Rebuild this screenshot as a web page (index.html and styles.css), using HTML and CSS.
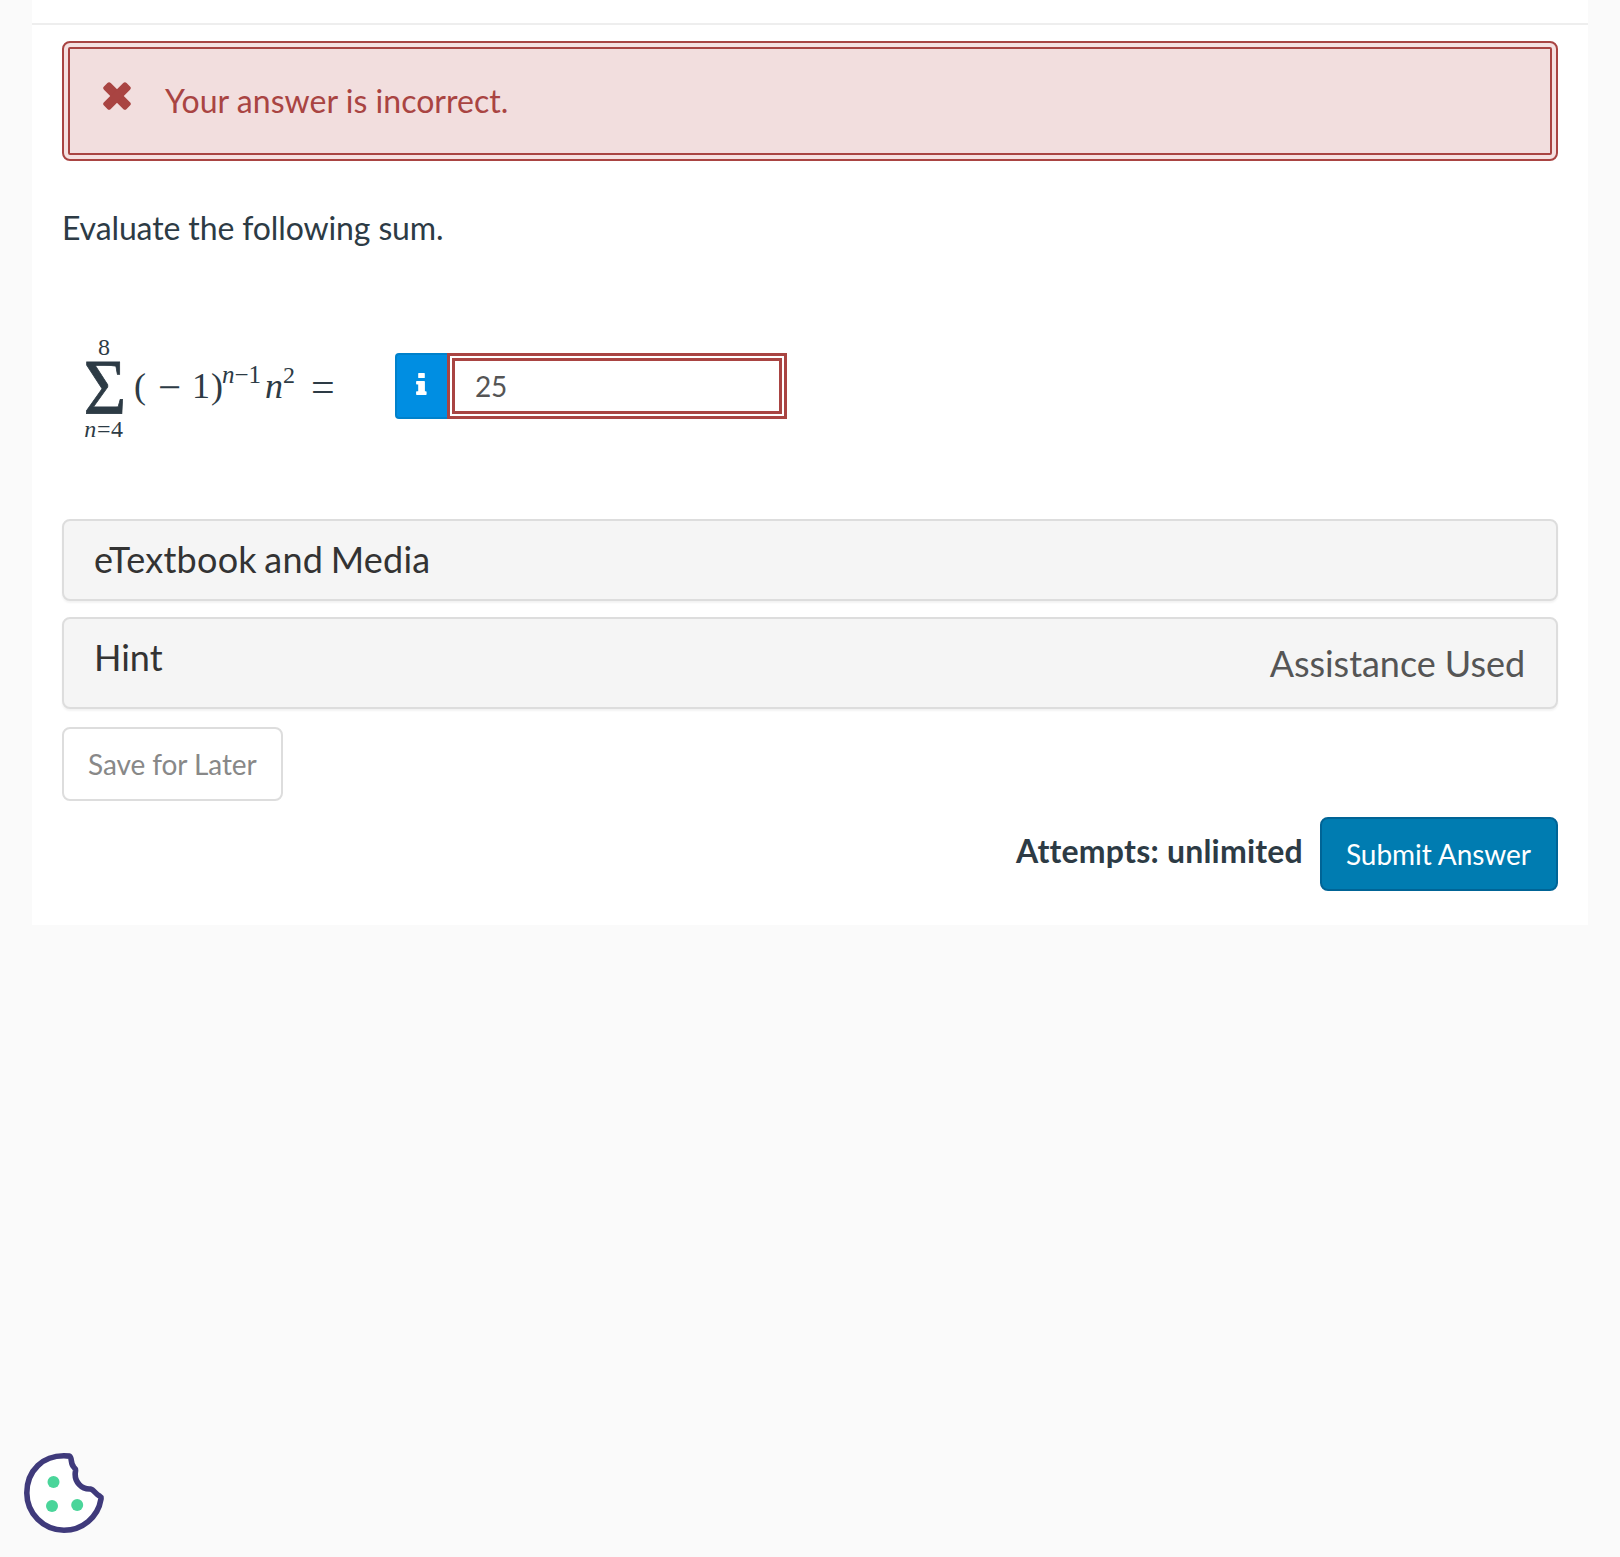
FILE: index.html
```html
<!DOCTYPE html>
<html lang="en">
<head>
    <meta charset="UTF-8">
    <meta name="viewport" content="width=device-width, initial-scale=1.0">
    <title>Question</title>
    <link rel="stylesheet" href="styles.css">
</head>
<body>
    <main class="card">
        <div class="card-top"></div>

        <div class="content">
            <div class="alert">
                <div class="alert-inner">
                    <svg class="icon-times" viewBox="0 0 28 28">
                        <g transform="rotate(45 14 14)">
                            <rect x="-2" y="9.200" width="32" height="9.600" rx="2.400" />
                            <rect x="9.200" y="-2" width="9.600" height="32" rx="2.400" />
                        </g>
                    </svg>
                    <span class="alert-text">Your answer is incorrect.</span>
                </div>
            </div>

            <p class="question">Evaluate the following sum.</p>

            <div class="answer-row">
                <div class="formula">
                    <div class="sum">
                        <span class="limit">8</span>
                        <span class="sigma">Σ</span>
                        <span class="limit lower"><i>n</i>=4</span>
                    </div>
                    <span class="paren">(</span>
                    <span class="minus">−</span>
                    <span class="one">1)</span>
                    <span class="sup exponent"><i>n</i>−1</span>
                    <span class="base"><i>n</i></span>
                    <span class="sup">2</span>
                    <span class="equals">=</span>
                </div>

                <div class="input-group">
                    <button class="info-btn" aria-label="Info">
                        <svg class="icon-info" viewBox="0 0 11 22">
                            <path d="M2.8 0h5.400q.6 0 .6.6v3.800q0 .6-.6.6H2.800q-.6 0-.6-.6V.6q0-.6.6-.6zM.8 8h7.400q.7 0 .7.7v9.500h1q.7 0 .7.7v2.300q0 .7-.7.7H.8q-.7 0-.7-.7v-2.300q0-.7.7-.7h1.400v-6.700H.8q-.7 0-.7-.7V8.700q0-.7.7-.7z" />
                        </svg>
                    </button>
                    <input class="answer-input" type="text" value="25">
                </div>
            </div>

            <div class="panel">
                <span class="etext">eTextbook and Media</span>
            </div>
            <div class="panel hint">
                <span>Hint</span>
                <span class="assist">Assistance Used</span>
            </div>

            <button class="btn save-btn">Save for Later</button>

            <div class="submit-row">
                <span class="attempts">Attempts: unlimited</span>
                <button class="btn submit-btn">Submit Answer</button>
            </div>
        </div>
    </main>

    <!-- Cookie settings -->
    <svg class="cookie" viewBox="0 0 80 80">
        <path class="cookie-body" d="M45.500 3.100 C18 0.300 2.800 19 2.800 40 A37.300 37.300 0 0 0 40 77.200 C58 77.200 74 64.500 77 46 Q77.300 44 75.500 43 C72 41.800 70 36.500 66.500 36 C58 36.500 49.500 29 51.500 18 Q51.800 15.800 50 14.300 C46 10.500 48.500 5 45.500 3.100 Z" />
        <circle cx="29.500" cy="29" r="6" />
        <circle cx="28" cy="53" r="6" />
        <circle cx="53.200" cy="52" r="6" />
    </svg>
</body>
</html>
```
FILE: styles.css
```css
* {
    box-sizing: border-box;
}

body {
    margin: 0;
    min-height: 1557px;
    background-color: #fafafa;
    color: #2d3b45;
    font-family: Lato, sans-serif;
    font-size: 32px;
    line-height: 38px;
    font-variant-ligatures: none;
}

button {
    font-family: inherit;
    font-variant-ligatures: none;
    cursor: pointer;
}

.card {
    height: 925px;
    margin: 0 32px;
    background-color: #fff;
}

.card-top {
    height: 25px;
    border-bottom: 2px solid #eee;
}

.content {
    padding: 16px 30px 0;
}

/* Alert */
.alert {
    height: 120px;
    padding: 4px;
    border: 2px solid #a94442;
    border-radius: 8px;
    background-color: #f5e0e0;
}

.alert-inner {
    display: flex;
    height: 108px;
    padding: 33px 32px;
    border: 2px solid #a94442;
    border-radius: 2px;
    background-color: #f2dede;
    color: #a94442;
}

.icon-times {
    width: 28px;
    height: 28px;
    margin: -0.5px 34.5px 0 0.5px;
    fill: #a94442;
}

.alert-text {
    letter-spacing: 0.04px;
}

.question {
    margin: 47.5px 0 0;
    letter-spacing: -0.12px;
}

/* Formula and answer */
.answer-row {
    display: flex;
    height: 112px;
    margin-top: 86.5px;
}

.formula {
    display: flex;
    width: 333px;
    padding: 2px 0 0 22px;
    font-family: "Liberation Serif", serif;
    font-size: 36px;
    line-height: 40px;
    white-space: nowrap;
}

.formula > span {
    margin-top: 31px;
}

.sum {
    display: flex;
    flex-direction: column;
    align-items: center;
    width: 42px;
    margin-left: -1px;
}

.limit {
    font-size: 24px;
    line-height: 24px;
}

.lower {
    margin-top: 1px;
    letter-spacing: 0.6px;
}

.sigma {
    height: 57px;
    font-size: 79px;
    line-height: 55px;
    transform: translateX(1px) scaleX(0.93);
    -webkit-text-stroke: 0.8px #2d3b45;
}

.paren {
    width: 24px;
    margin-left: 9px;
}

.formula > .minus {
    width: 34px;
    margin-top: 32px;
    font-size: 41px;
}

.one {
    letter-spacing: 1px;
}

.formula > .sup {
    margin-top: 20px;
    font-size: 24px;
}

.formula > .exponent {
    width: 43px;
    margin-left: -2px;
    font-size: 25px;
}

.formula > .equals {
    margin: 32px 0 0 16px;
    font-size: 42px;
}

.input-group {
    display: flex;
    height: 66px;
    margin-top: 20px;
}

.info-btn {
    width: 52px;
    padding: 0 2px 2px 0;
    border: 2px solid #0081cb;
    border-right: 0;
    border-radius: 4px 0 0 4px;
    background-color: #008ee2;
}

.icon-info {
    width: 11px;
    height: 22px;
    fill: #fff;
}

.answer-input {
    width: 340px;
    padding: 0 20px;
    border: 8px double #a94442;
    background-color: #fff;
    color: #555;
    font-family: inherit;
    font-size: 28px;
    letter-spacing: -0.3px;
}

/* Panels */
.panel {
    display: flex;
    justify-content: space-between;
    height: 82px;
    margin-top: 74px;
    padding: 16px 31px 0 30px;
    border: 2px solid #ddd;
    border-radius: 8px;
    background-color: #f5f5f5;
    box-shadow: 0 2px 2px rgba(0, 0, 0, 0.05);
    color: #333;
    font-size: 36px;
    line-height: 44px;
}

.panel.hint {
    height: 92px;
    margin-top: 16px;
}

.etext {
    letter-spacing: 0.25px;
    word-spacing: -2px;
}

.assist {
    margin-top: 6px;
    color: #555;
    letter-spacing: -0.05px;
}

/* Buttons */
.btn {
    display: block;
    height: 74px;
    padding: 0 24px;
    border: 2px solid #ddd;
    border-radius: 8px;
    background-color: #fff;
    color: #888;
    font-size: 28px;
}

.save-btn {
    margin-top: 18px;
    letter-spacing: -0.07px;
}

.submit-row {
    display: flex;
    justify-content: flex-end;
    margin-top: 16px;
}

.attempts {
    margin: 15px 17px 0 0;
    font-weight: bold;
    letter-spacing: 0.22px;
}

.submit-btn {
    padding: 0 25px 0 24px;
    border-color: #006496;
    background-color: #007cb1;
    color: #fff;
    letter-spacing: -0.05px;
}

.cookie {
    position: fixed;
    left: 24px;
    top: 1453px;
    width: 80px;
    height: 80px;
    fill: #4ad59a;
}

.cookie-body {
    fill: #fff;
    stroke: #3f3a7b;
    stroke-width: 5.6;
    stroke-linejoin: round;
}
```
